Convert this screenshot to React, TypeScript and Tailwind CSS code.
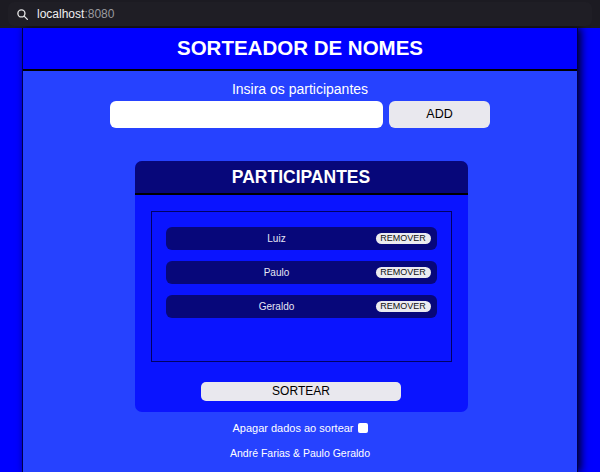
import React, { useState } from 'react';

const nomes = ['Luiz', 'Paulo', 'Geraldo'];

const App = () => {
  const [participantes, setParticipantes] = useState<string[]>(nomes);
  const [nome, setNome] = useState('');

  return (
    <div className="h-[472px] overflow-hidden bg-[#0000ff] font-['Liberation_Sans',Arial,sans-serif]">
      {/* barra do navegador */}
      <div className="h-[28px] bg-[#1c1b22] flex items-center px-[8px]">
        <div className="flex-1 h-[24px] bg-[#1f1e25] rounded-md flex items-center gap-[8px] px-[8px]">
          <svg width="13" height="13" viewBox="0 0 24 24" fill="none" stroke="#e5e5e5" strokeWidth="2.5" strokeLinecap="round">
            <circle cx="10" cy="10" r="6.5" />
            <path d="M15 15l6 6" />
          </svg>
          <span className="text-[12px] text-[#f0f0f0]">
            localhost<span className="text-[#9a9a9f]">:8080</span>
          </span>
        </div>
      </div>

      <div className="mx-[22px] h-[444px] shadow-[3px_0_8px_rgba(0,0,0,0.85)] border-x border-[#00004a] flex flex-col">
        {/* Cabeçalho */}
        <header className="h-[43px] shrink-0 bg-[#0000ff] border-b-2 border-black flex items-center justify-center">
          <h1 className="text-[20.5px] font-bold text-white">SORTEADOR DE NOMES</h1>
        </header>

        <main className="flex-1 bg-[#2642ff] flex flex-col items-center pt-[9px]">
          <p className="text-[14px] text-white leading-[18px]">Insira os participantes</p>
          <div className="flex gap-[6px] mt-[3px]">
            <input
              value={nome}
              onChange={(e) => setNome(e.target.value)}
              className="w-[273px] h-[27px] bg-white rounded-[6px] outline-none px-2 text-[13px]"
            />
            <button
              onClick={() => {
                if (nome.trim()) setParticipantes([...participantes, nome.trim()]);
                setNome('');
              }}
              className="w-[101px] h-[27px] bg-[#e9e8ee] rounded-[6px] text-[12.5px] text-black"
            >
              ADD
            </button>
          </div>

          {/* Card participantes */}
          <section className="mt-[33px] ml-[2px] w-[333px] h-[251px] rounded-[7px] overflow-hidden bg-[#0a14ff] flex flex-col">
            <div className="h-[34px] shrink-0 bg-[#07077a] border-b-2 border-black flex items-center justify-center">
              <h2 className="text-[17.5px] font-bold text-white">PARTICIPANTES</h2>
            </div>
            <div className="mx-[16px] mt-[16px] h-[151px] border border-[#000066] pt-[15px] px-[14px] flex flex-col gap-[11px]">
              {participantes.map((p) => (
                <div key={p} className="h-[23px] bg-[#07077a] rounded-[6px] flex items-center pl-[12px] pr-[6px]">
                  <span className="flex-1 text-center text-[10px] text-[#e6e6f5]">{p}</span>
                  <button
                    onClick={() => setParticipantes(participantes.filter((x) => x !== p))}
                    className="w-[55px] h-[11px] bg-[#ebebf0] rounded-full text-[9px] leading-[11px] text-[#111] text-center"
                  >
                    REMOVER
                  </button>
                </div>
              ))}
            </div>
            <div className="flex justify-center mt-[20px]">
              <button className="w-[200px] h-[19px] bg-[#e9e8ee] rounded-[5px] text-[12px] text-black leading-[19px]">
                SORTEAR
              </button>
            </div>
          </section>

          <label className="mt-[8px] flex items-center gap-[4px] text-[11px] text-white">
            Apagar dados ao sortear
            <span className="w-[10px] h-[10px] bg-white rounded-[2px] inline-block" />
          </label>
          <p className="mt-[9px] text-[10.5px] text-white">André Farias &amp; Paulo Geraldo</p>
        </main>
      </div>
    </div>
  );
};

export default App;
